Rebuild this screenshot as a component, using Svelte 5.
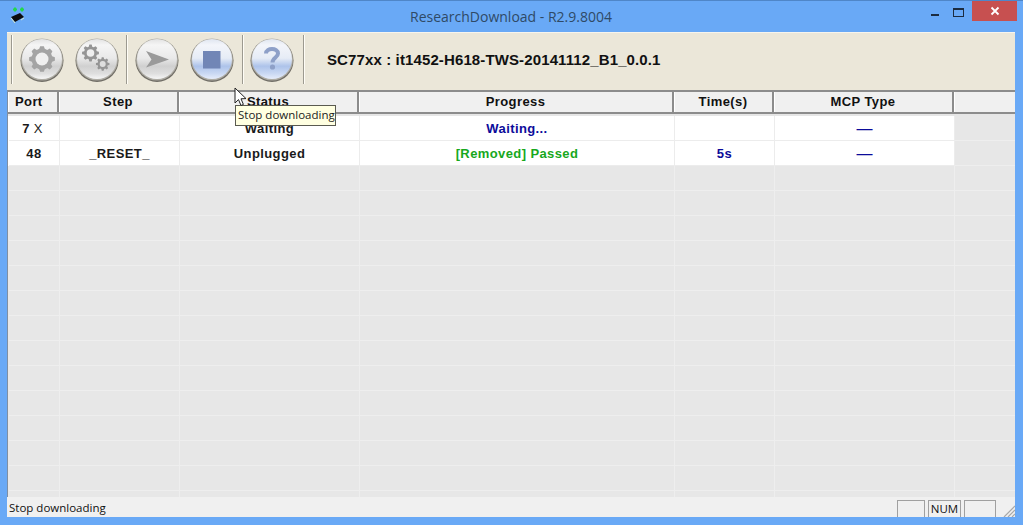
<script>
  const columns = [
    { label: 'Port', width: 51, cls: 'port' },
    { label: 'Step', width: 120 },
    { label: 'Status', width: 180 },
    { label: 'Progress', width: 315 },
    { label: 'Time(s)', width: 100 },
    { label: 'MCP Type', width: 180 },
    { label: '', width: 61 }
  ];

  const rows = [
    { port: '7', mark: 'X', step: '', status: 'Waiting', progress: 'Waiting...', tone: 'blue', time: '', mcp: '—' },
    { port: '48', mark: '', step: '_RESET_', status: 'Unplugged', progress: '[Removed] Passed', tone: 'green', time: '5s', mcp: '—' }
  ];

  const emptyRows = Array(14).fill(0);

  // builds a cog outline for the toolbar icons
  function gear(cx, cy, outer, inner, teeth) {
    const pts = [];
    const step = (Math.PI * 2) / teeth;
    for (let i = 0; i < teeth; i++) {
      const a = i * step - Math.PI / 2;
      const list = [
        [a - step * 0.34, inner],
        [a - step * 0.18, outer],
        [a + step * 0.18, outer],
        [a + step * 0.34, inner]
      ];
      for (const [t, r] of list) {
        pts.push(`${(cx + Math.cos(t) * r).toFixed(2)},${(cy + Math.sin(t) * r).toFixed(2)}`);
      }
    }
    return 'M' + pts.join('L') + 'Z';
  }
</script>

{#snippet roundButton(kind, blue)}
  <svg class="round" width="44" height="44" viewBox="0 0 44 44">
    <defs>
      <linearGradient id="face-{kind}" x1="0" y1="0" x2="0" y2="1">
        <stop offset="0" stop-color={blue ? '#dfe5f0' : '#e2e2e2'} />
        <stop offset="0.15" stop-color={blue ? '#f3f5fa' : '#f5f5f5'} />
        <stop offset="0.48" stop-color={blue ? '#e6ecf6' : '#e9e9e9'} />
        <stop offset="0.68" stop-color={blue ? '#adc3ea' : '#d0d0d0'} />
        <stop offset="0.86" stop-color={blue ? '#c9d8f3' : '#dedede'} />
        <stop offset="1" stop-color={blue ? '#e6edfb' : '#f6f6f6'} />
      </linearGradient>
      <filter id="soft-{kind}"><feGaussianBlur stdDeviation="0.4" /></filter>
    </defs>
    <circle cx="22" cy="22.5" r="21.5" fill="#6f6c65" />
    <circle cx="22" cy="21.5" r="21" fill="#aeaca4" />
    <circle cx="22" cy="21" r="20" fill="url(#face-{kind})" />
    <g filter="url(#soft-{kind})">
      {#if kind === 'gear'}
        <path d={gear(22, 21, 13, 10.5, 8)} fill="#a4a4a4" />
        <circle cx="22" cy="21" r="6.5" fill="#f0f0f0" />
      {:else if kind === 'gears'}
        <path d={gear(15.5, 15, 8.5, 6.5, 8)} fill="#959595" />
        <circle cx="15.5" cy="15" r="3.8" fill="#eeeeee" />
        <path d={gear(27.7, 26, 6.8, 5.2, 8)} fill="#959595" />
        <circle cx="27.7" cy="26" r="3" fill="#dedede" />
      {:else if kind === 'play'}
        <path d="M11 13 L34 21.5 L11 29.5 L16.5 21.5 Z" fill="#9a9a9a" />
      {:else if kind === 'stop'}
        <rect x="13" y="13" width="17.5" height="17.5" fill="#7186b6" />
      {:else}
        <path d="M16 15.5 C16 9.5 28 9.5 28 15.5 C28 19.5 22.5 19.5 22.5 24.5" fill="none" stroke="#8ea0c8" stroke-width="4" />
        <circle cx="22.5" cy="29" r="2.6" fill="#8ea0c8" />
      {/if}
    </g>
  </svg>
{/snippet}

<div class="window">
  <header class="titlebar">
    <svg class="app-icon" width="18" height="18" viewBox="0 0 18 18">
      <path d="M4 2.5h4M6 .5v4M11 2.5h4M13 .5v4" stroke="#22d84a" stroke-width="2" />
      <path d="M2 10 L11 6 L15 10 L6 15 Z" fill="#0c0c0c" />
      <path d="M2 11l4 5M15 11l-3 2" stroke="#d8e8c8" stroke-width="1" />
    </svg>
    <span class="title">ResearchDownload - R2.9.8004</span>
    <div class="controls">
      <span class="min"></span>
      <span class="max"></span>
      <span class="close">
        <svg width="10" height="10" viewBox="0 0 10 10"><path d="M1.5 1.5l7 7M8.5 1.5l-7 7" stroke="#fff" stroke-width="1.8" /></svg>
      </span>
    </div>
  </header>

  <div class="client">
    <div class="toolbar">
      <div class="group first">
        {@render roundButton('gear', false)}
        {@render roundButton('gears', false)}
      </div>
      <div class="group second">
        {@render roundButton('play', false)}
        {@render roundButton('stop', true)}
      </div>
      <div class="group third">
        {@render roundButton('help', true)}
      </div>
      <div class="package">SC77xx : it1452-H618-TWS-20141112_B1_0.0.1</div>
    </div>

    <div class="grid">
      <div class="head">
        {#each columns as col}
          <div class="hcell" class:port={col.cls === 'port'} style="width: {col.width}px">{col.label}</div>
        {/each}
      </div>

      {#each rows as row}
        <div class="row">
          <div class="cell" class:marked={row.mark} style="width: {columns[0].width}px">{row.port}{#if row.mark}<span class="mark">{row.mark}</span>{/if}</div>
          <div class="cell" style="width: {columns[1].width}px">{row.step}</div>
          <div class="cell" style="width: {columns[2].width}px">{row.status}</div>
          <div class="cell {row.tone}" style="width: {columns[3].width}px">{row.progress}</div>
          <div class="cell blue" style="width: {columns[4].width}px">{row.time}</div>
          <div class="cell blue dash" style="width: {columns[5].width}px">{row.mcp}</div>
          <div class="cell blank" style="width: {columns[6].width}px"></div>
        </div>
      {/each}

      {#each emptyRows as _}
        <div class="row empty">
          {#each columns as col}
            <div class="cell blank" style="width: {col.width}px"></div>
          {/each}
        </div>
      {/each}
    </div>

    <footer class="statusbar">
      <span class="hint">Stop downloading</span>
      <span class="pane a"></span>
      <span class="pane b">NUM</span>
      <span class="pane c"></span>
      <svg class="grip" width="12" height="12" viewBox="0 0 12 12">
        <path d="M1 12L12 1M5 12l7-7M9 12l3-3" stroke="#a8a8a8" stroke-width="1.2" />
      </svg>
    </footer>
  </div>

  <div class="tooltip">Stop downloading</div>
  <svg class="cursor" width="14" height="20" viewBox="0 0 14 20">
    <path d="M1 1 L1 16 L4.5 12.6 L7 18.5 L9.4 17.4 L7 11.8 L12 11.6 Z" fill="#fff" stroke="#222" stroke-width="1" />
  </svg>
</div>

<style>
  :global(body) {
    margin: 0;
    overflow: hidden;
  }

  .window {
    position: relative;
    width: 1023px;
    height: 525px;
    box-sizing: border-box;
    display: flex;
    flex-direction: column;
    padding: 0 8px 8px 7px;
    background: #69a9f6;
    border-top: 1px solid #4f86c8;
    font-family: 'Liberation Sans', Arial, sans-serif;
    overflow: hidden;
  }

  .titlebar {
    position: relative;
    height: 31px;
    flex: none;
    display: flex;
    align-items: center;
    justify-content: center;
  }

  .app-icon {
    position: absolute;
    left: 2px;
    top: 6px;
  }

  .title {
    font-family: 'Open Sans', sans-serif;
    font-size: 14px;
    color: #2f4a66;
    margin-top: -1px;
  }

  .controls {
    position: absolute;
    right: -2px;
    top: 0;
    display: flex;
    align-items: flex-start;
  }

  .min {
    width: 8px;
    height: 2px;
    margin: 13px 14px 0 0;
    background: #1c2c40;
  }

  .max {
    width: 9px;
    height: 6px;
    margin: 7px 8px 0 0;
    border: 1px solid #1c2c40;
    border-top-width: 2px;
  }

  .close {
    width: 45px;
    height: 20px;
    display: flex;
    align-items: center;
    justify-content: center;
    background: #c75050;
  }

  .client {
    flex: 1;
    min-height: 0;
    display: flex;
    flex-direction: column;
    background: #f0f0f0;
  }

  .toolbar {
    height: 58px;
    flex: none;
    box-sizing: border-box;
    display: flex;
    align-items: stretch;
    padding: 2px 0 6px 4px;
    background: #ebe7d9;
    border-top: 1px solid #f7f5ee;
  }

  .group {
    display: flex;
    align-items: center;
    gap: 11px;
    border-left: 1px solid #9c9a90;
    box-shadow: inset 1px 0 0 #fffdf6;
  }

  .group.first {
    padding: 0 7px 0 8px;
  }

  .group.second {
    padding: 0 8px;
  }

  .group.third {
    padding: 0 9px 0 7px;
  }

  .round {
    display: block;
    flex: none;
  }

  .package {
    display: flex;
    align-items: center;
    padding: 0 0 0 23px;
    border-left: 1px solid #9c9a90;
    box-shadow: inset 1px 0 0 #fffdf6;
    font-size: 15px;
    font-weight: bold;
    letter-spacing: 0.12px;
    color: #111;
  }

  .grid {
    flex: 1;
    min-height: 0;
    overflow: hidden;
    background: #e6e6e6;
    border-left: 1px solid #7f8fa3;
  }

  .head {
    display: flex;
    height: 24px;
    box-sizing: border-box;
    border-top: 2px solid #8c8c8c;
    border-bottom: 2px solid #8c8c8c;
    background: #f0f0f0;
  }

  .hcell {
    flex: none;
    box-sizing: border-box;
    border-right: 2px solid #8c8c8c;
    box-shadow: inset 1px 0 0 #fff;
    text-align: center;
    font-size: 13px;
    line-height: 20px;
    font-weight: bold;
    letter-spacing: 0.4px;
    color: #111;
  }

  .hcell.port {
    text-align: left;
    padding-left: 7px;
  }

  .hcell:last-child {
    border-right: none;
  }

  .row {
    display: flex;
    height: 25px;
    padding-left: 1px;
    background: #fff;
  }

  .row.empty {
    background: #e7e7e7;
  }

  .row:nth-child(2) {
    margin-top: 2px;
  }

  .cell {
    flex: none;
    box-sizing: border-box;
    height: 25px;
    background: #fff;
    border-right: 1px solid #ececec;
    border-bottom: 1px solid #ececec;
    text-align: center;
    font-size: 13px;
    line-height: 25px;
    font-weight: bold;
    letter-spacing: 0.4px;
    color: #1a1a1a;
  }

  .cell.marked {
    padding-right: 3px;
  }

  .mark {
    margin-left: 4px;
    font-weight: normal;
  }

  .cell.blue {
    color: #0b0b9a;
  }

  .cell.dash {
    font-size: 16px;
    font-weight: normal;
    letter-spacing: 0;
  }

  .cell.green {
    color: #17a81d;
  }

  .cell.blank {
    background: #e7e7e7;
    border-color: #eeeeee;
  }

  .statusbar {
    position: relative;
    flex: none;
    height: 20px;
    display: flex;
    align-items: center;
    background: #f0f0f0;
    font-family: 'Open Sans', sans-serif;
    font-size: 11.5px;
    color: #111;
  }

  .hint {
    padding-left: 2px;
    flex: 1;
  }

  .pane {
    box-sizing: border-box;
    height: 17px;
    margin-top: 3px;
    border: 1px solid #a0a0a0;
    border-bottom: none;
    line-height: 16px;
    text-align: center;
  }

  .pane.a {
    width: 28px;
    margin-right: 3px;
  }

  .pane.b {
    width: 33px;
    margin-right: 3px;
  }

  .pane.c {
    width: 32px;
    margin-right: 19px;
  }

  .grip {
    position: absolute;
    right: 0;
    bottom: 0;
  }

  .tooltip {
    position: absolute;
    left: 235px;
    top: 104px;
    width: 101px;
    height: 21px;
    box-sizing: border-box;
    border: 1px solid #5a5a50;
    background: #ffffe1;
    font-family: 'Open Sans', sans-serif;
    font-size: 11.5px;
    line-height: 18px;
    padding-left: 2px;
    color: #222;
    white-space: nowrap;
  }

  .cursor {
    position: absolute;
    left: 234px;
    top: 86px;
  }
</style>
